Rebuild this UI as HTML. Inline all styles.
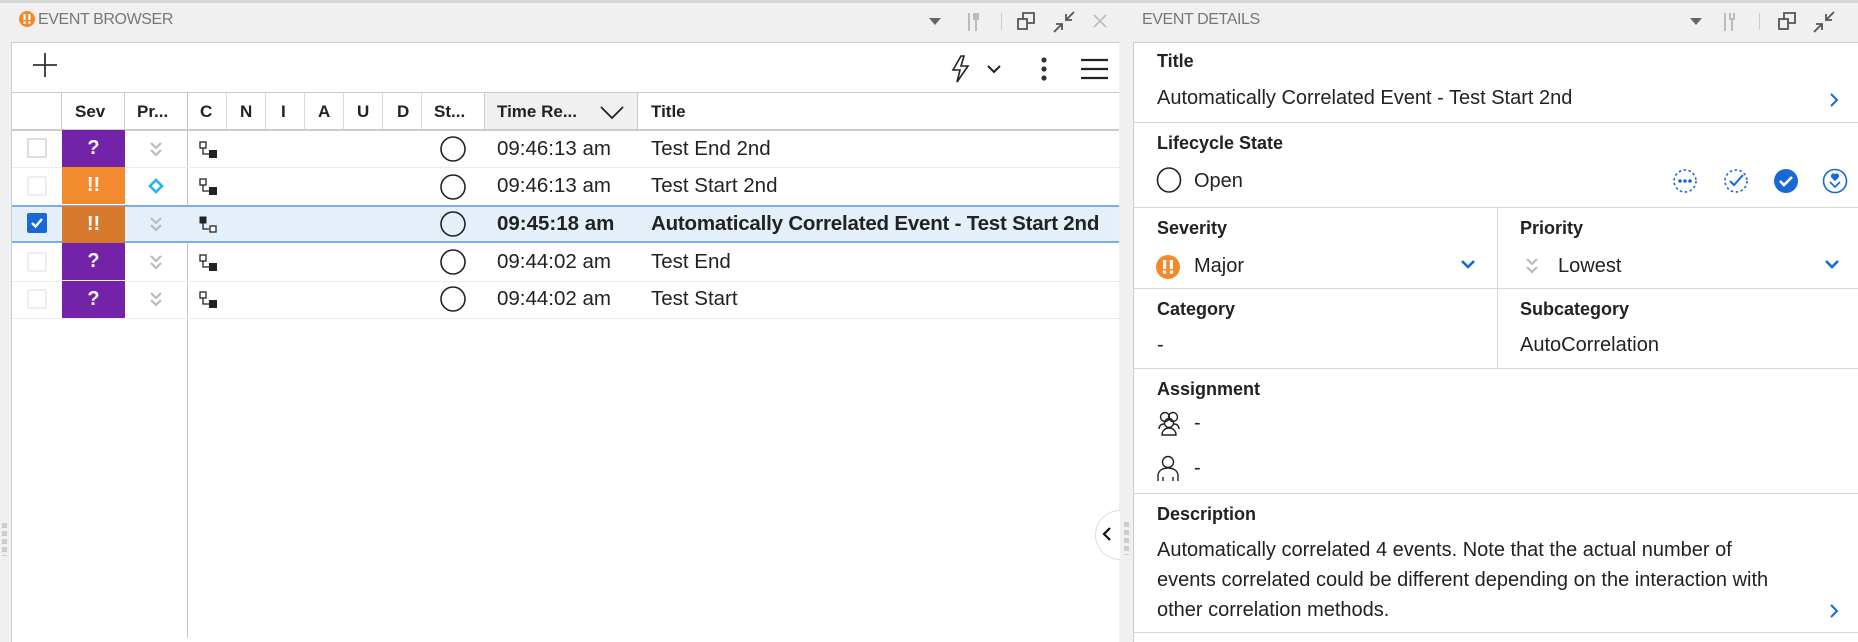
<!DOCTYPE html>
<html><head><meta charset="utf-8"><style>
*{margin:0;padding:0;box-sizing:border-box}
body{width:1858px;height:637px;overflow:hidden;background:#f0f0f0;font-family:"Liberation Sans",sans-serif;color:#222;position:relative}
.a{position:absolute}
.hl{position:absolute;background:#d8d8d8}
.t{position:absolute;font-size:20px;white-space:nowrap;line-height:22px}
.r{font-size:20.5px}
.b{font-weight:bold}
.lb{font-size:18px;font-weight:bold}
.hd{position:absolute;font-size:16px;color:#777;letter-spacing:-0.4px;top:11px}
.ch{position:absolute;font-size:17px;font-weight:bold;top:102px}
.cb{position:absolute;left:27px;width:20px;height:20px;border:2px solid #e3e3e3;border-radius:2px;background:#fff}
.sev{position:absolute;left:62px;width:63px;height:37px;color:#fff;font-weight:bold;font-size:20px;text-align:center;line-height:37px}
</style></head><body>
<div class="hl" style="left:0;top:0;width:1858px;height:3px;background:#d6d6d6"></div>
<svg class="a" style="left:19px;top:11px" width="16" height="16"><circle cx="8" cy="8" r="8" fill="#f18a2a"/><rect x="4.5" y="3" width="2.2" height="6" fill="#fff"/><rect x="9.3" y="3" width="2.2" height="6" fill="#fff"/><rect x="4.5" y="10.5" width="2.2" height="2.2" fill="#fff"/><rect x="9.3" y="10.5" width="2.2" height="2.2" fill="#fff"/></svg>
<div class="hd" style="left:38px">EVENT BROWSER</div>
<svg class="a" style="left:928px;top:17px" width="14" height="10"><path d="M1 1h12L7 8z" fill="#666"/></svg>
<svg class="a" style="left:966px;top:12px" width="14" height="20" stroke="#bbb" stroke-width="2" fill="none"><path d="M3 1v18M10 1v7M10 8v11"/><path d="M8 1v6h4V1"/></svg>
<div class="a" style="left:1001px;top:13px;width:1px;height:17px;background:#ccc"></div>
<svg class="a" style="left:1017px;top:12px" width="18" height="18" stroke="#555" stroke-width="1.8" fill="none"><rect x="1" y="7" width="9" height="10"/><path d="M6 7V1h11v10h-7"/></svg>
<svg class="a" style="left:1053px;top:11px" width="22" height="22" stroke="#555" stroke-width="1.8" fill="none"><path d="M13 9L21 1M13 3v6h6M9 13L1 21M9 19v-6H3"/></svg>
<svg class="a" style="left:1093px;top:14px" width="14" height="14" stroke="#bbb" stroke-width="1.6"><path d="M1 1l12 12M13 1L1 13"/></svg>
<div class="a" style="left:11px;top:42px;width:1108px;height:600px;background:#fff;border-left:1px solid #ccc;border-top:1px solid #ccc"></div>
<svg class="a" style="left:33px;top:53px" width="24" height="24" stroke="#333" stroke-width="1.8"><path d="M12 0v24M0 12h24"/></svg>
<svg class="a" style="left:950px;top:54px" width="22" height="30" stroke="#222" stroke-width="1.6" fill="none"><path d="M11 2L3 16h7l-3 12 11-16h-7l3-10z"/></svg>
<svg class="a" style="left:987px;top:65px" width="14" height="9" stroke="#222" stroke-width="2" fill="none"><path d="M1 1l6 6 6-6"/></svg>
<svg class="a" style="left:1040px;top:56px" width="8" height="26" fill="#333"><circle cx="4" cy="4" r="2.6"/><circle cx="4" cy="13" r="2.6"/><circle cx="4" cy="22" r="2.6"/></svg>
<svg class="a" style="left:1081px;top:58px" width="27" height="22" stroke="#222" stroke-width="2.2"><path d="M0 2h27M0 11h27M0 20h27"/></svg>
<div class="hl" style="left:12px;top:92px;width:1107px;height:1px;background:#ccc"></div>
<div class="a" style="left:484px;top:93px;width:153px;height:37px;background:#f0f0f0"></div>
<div class="hl" style="left:12px;top:129px;width:1107px;height:2px;background:#ccc"></div>
<div class="hl" style="left:61px;top:93px;width:1px;height:36px;background:#ccc"></div>
<div class="hl" style="left:124px;top:93px;width:1px;height:36px;background:#ccc"></div>
<div class="hl" style="left:187px;top:93px;width:1px;height:545px;background:#c4c4c4"></div>
<div class="hl" style="left:226px;top:93px;width:1px;height:36px"></div>
<div class="hl" style="left:265px;top:93px;width:1px;height:36px"></div>
<div class="hl" style="left:304px;top:93px;width:1px;height:36px"></div>
<div class="hl" style="left:343px;top:93px;width:1px;height:36px"></div>
<div class="hl" style="left:382px;top:93px;width:1px;height:36px"></div>
<div class="hl" style="left:421px;top:93px;width:1px;height:36px"></div>
<div class="hl" style="left:484px;top:93px;width:1px;height:36px;background:#ccc"></div>
<div class="hl" style="left:637px;top:93px;width:1px;height:36px;background:#ccc"></div>
<div class="ch" style="left:75px">Sev</div>
<div class="ch" style="left:137px">Pr...</div>
<div class="ch" style="left:200px">C</div>
<div class="ch" style="left:240px">N</div>
<div class="ch" style="left:281px">I</div>
<div class="ch" style="left:318px">A</div>
<div class="ch" style="left:357px">U</div>
<div class="ch" style="left:397px">D</div>
<div class="ch" style="left:434px">St...</div>
<div class="ch" style="left:497px">Time Re...</div>
<svg class="a" style="left:600px;top:106px" width="24" height="14" stroke="#222" stroke-width="1.8" fill="none"><path d="M1 1l11 11L23 1"/></svg>
<div class="ch" style="left:651px">Title</div>
<div class="a" style="left:12px;top:205px;width:1107px;height:38px;background:#e4effa;border-top:2px solid #79aee6;border-bottom:2px solid #79aee6"></div>
<div class="hl" style="left:12px;top:167px;width:1107px;height:1px;background:#ececec"></div>
<div class="hl" style="left:12px;top:281px;width:1107px;height:1px;background:#ececec"></div>
<div class="hl" style="left:12px;top:318px;width:1107px;height:1px;background:#ececec"></div>
<div class="cb" style="top:138px;border-color:#ddd"></div>
<div class="cb" style="top:176px;border-color:#eee"></div>
<div class="cb" style="top:213px;background:#1769d8;border-color:#1769d8"><svg width="16" height="16" style="position:absolute;left:0;top:0" stroke="#fff" stroke-width="2.4" fill="none"><path d="M3 8l3.5 3.5L13 4"/></svg></div>
<div class="cb" style="top:252px;border-color:#eee"></div>
<div class="cb" style="top:289px;border-color:#eee"></div>
<div class="sev" style="top:130px;background:#7323a8">?</div>
<div class="sev" style="top:167px;background:#f28b30">!!</div>
<div class="sev" style="top:206px;background:#d87a2e">!!</div>
<div class="sev" style="top:243px;background:#7323a8">?</div>
<div class="sev" style="top:281px;background:#7323a8">?</div>
<svg class="a" style="left:149px;top:141px" width="14" height="18" stroke="#bbb" stroke-width="2.2" fill="none"><path d="M2 2l5 5 5-5M2 9l5 5 5-5"/></svg>
<svg class="a" style="left:148px;top:178px" width="16" height="16" stroke="#22b5ee" stroke-width="2.6" fill="none"><path d="M8 2l6 6-6 6-6-6z"/></svg>
<svg class="a" style="left:149px;top:216px" width="14" height="18" stroke="#bbb" stroke-width="2.2" fill="none"><path d="M2 2l5 5 5-5M2 9l5 5 5-5"/></svg>
<svg class="a" style="left:149px;top:254px" width="14" height="18" stroke="#bbb" stroke-width="2.2" fill="none"><path d="M2 2l5 5 5-5M2 9l5 5 5-5"/></svg>
<svg class="a" style="left:149px;top:291px" width="14" height="18" stroke="#bbb" stroke-width="2.2" fill="none"><path d="M2 2l5 5 5-5M2 9l5 5 5-5"/></svg>
<svg class="a" style="left:199px;top:141px" width="19" height="18"><rect x="1" y="1" width="6" height="6" fill="#fff" stroke="#222" stroke-width="1.3"/><path d="M4 7v6h6" stroke="#222" stroke-width="1.3" fill="none"/><rect x="10" y="9" width="8" height="8" fill="#222"/></svg>
<svg class="a" style="left:199px;top:178px" width="19" height="18"><rect x="1" y="1" width="6" height="6" fill="#fff" stroke="#222" stroke-width="1.3"/><path d="M4 7v6h6" stroke="#222" stroke-width="1.3" fill="none"/><rect x="10" y="9" width="8" height="8" fill="#222"/></svg>
<svg class="a" style="left:199px;top:216px" width="19" height="18"><rect x="0.5" y="0.5" width="7" height="7" fill="#222"/><path d="M4 7v6h6" stroke="#222" stroke-width="1.3" fill="none"/><rect x="11" y="10" width="6" height="6" fill="#fff" stroke="#222" stroke-width="1.3"/></svg>
<svg class="a" style="left:199px;top:254px" width="19" height="18"><rect x="1" y="1" width="6" height="6" fill="#fff" stroke="#222" stroke-width="1.3"/><path d="M4 7v6h6" stroke="#222" stroke-width="1.3" fill="none"/><rect x="10" y="9" width="8" height="8" fill="#222"/></svg>
<svg class="a" style="left:199px;top:291px" width="19" height="18"><rect x="1" y="1" width="6" height="6" fill="#fff" stroke="#222" stroke-width="1.3"/><path d="M4 7v6h6" stroke="#222" stroke-width="1.3" fill="none"/><rect x="10" y="9" width="8" height="8" fill="#222"/></svg>
<svg class="a" style="left:440px;top:136px" width="26" height="212" stroke="#222" stroke-width="1.6" fill="none"><ellipse cx="13" cy="13" rx="12" ry="12"/><ellipse cx="13" cy="51" rx="12" ry="12"/><ellipse cx="13" cy="88" rx="12" ry="12"/><ellipse cx="13" cy="126" rx="12" ry="12"/><ellipse cx="13" cy="163" rx="12" ry="12"/></svg>
<div class="t r" style="left:497px;top:138px">09:46:13 am</div>
<div class="t r" style="left:497px;top:175px">09:46:13 am</div>
<div class="t r b" style="left:497px;top:213px">09:45:18 am</div>
<div class="t r" style="left:497px;top:251px">09:44:02 am</div>
<div class="t r" style="left:497px;top:288px">09:44:02 am</div>
<div class="t r" style="left:651px;top:138px">Test End 2nd</div>
<div class="t r" style="left:651px;top:175px">Test Start 2nd</div>
<div class="t r b" style="left:651px;top:213px;letter-spacing:-0.2px">Automatically Correlated Event - Test Start 2nd</div>
<div class="t r" style="left:651px;top:251px">Test End</div>
<div class="t r" style="left:651px;top:288px">Test Start</div>
<div class="a" style="left:2px;top:523px;width:5px;height:33px;background:repeating-linear-gradient(#ccc 0 5px,transparent 5px 8px)"></div>
<div class="hd" style="left:1142px">EVENT DETAILS</div>
<svg class="a" style="left:1689px;top:17px" width="14" height="10"><path d="M1 1h12L7 8z" fill="#666"/></svg>
<svg class="a" style="left:1722px;top:12px" width="14" height="20" stroke="#bbb" stroke-width="2" fill="none"><path d="M3 1v18M10 8v11"/><path d="M8 1v6h4V1"/></svg>
<div class="a" style="left:1759px;top:13px;width:1px;height:17px;background:#ccc"></div>
<svg class="a" style="left:1778px;top:12px" width="18" height="18" stroke="#555" stroke-width="1.8" fill="none"><rect x="1" y="7" width="9" height="10"/><path d="M6 7V1h11v10h-7"/></svg>
<svg class="a" style="left:1813px;top:11px" width="22" height="22" stroke="#555" stroke-width="1.8" fill="none"><path d="M13 9L21 1M13 3v6h6M9 13L1 21M9 19v-6H3"/></svg>
<div class="a" style="left:1133px;top:42px;width:725px;height:600px;background:#fff;border-left:1px solid #ccc;border-top:1px solid #ccc"></div>
<div class="t lb" style="left:1157px;top:50px">Title</div>
<div class="t" style="left:1157px;top:87px">Automatically Correlated Event - Test Start 2nd</div>
<svg class="a" style="left:1829px;top:92px" width="10" height="16" stroke="#1769d8" stroke-width="2" fill="none"><path d="M2 2l6 6-6 6"/></svg>
<div class="hl" style="left:1134px;top:122px;width:724px;height:1px"></div>
<div class="t lb" style="left:1157px;top:132px">Lifecycle State</div>
<svg class="a" style="left:1156px;top:166px" width="26" height="28" stroke="#222" stroke-width="1.6" fill="none"><ellipse cx="13" cy="14" rx="11.5" ry="12"/></svg>
<div class="t" style="left:1194px;top:170px">Open</div>
<svg class="a" style="left:1672px;top:168px" width="26" height="26" stroke="#1769d8" stroke-width="1.6" fill="none" stroke-dasharray="2.5 2.5"><circle cx="13" cy="13" r="11"/><g fill="#1769d8" stroke="none"><circle cx="8" cy="13" r="1.8"/><circle cx="13" cy="13" r="1.8"/><circle cx="18" cy="13" r="1.8"/></g></svg>
<svg class="a" style="left:1723px;top:168px" width="26" height="26" stroke="#1769d8" stroke-width="1.6" fill="none"><circle cx="13" cy="13" r="11" stroke-dasharray="2.5 2.5"/><path d="M7 13l4 4 9-10" stroke-width="2"/></svg>
<svg class="a" style="left:1773px;top:168px" width="26" height="26"><circle cx="13" cy="13" r="12" fill="#1769d8"/><path d="M7 13l4 4 8-8" stroke="#fff" stroke-width="2.6" fill="none"/></svg>
<svg class="a" style="left:1822px;top:168px" width="26" height="26" stroke="#1769d8" stroke-width="1.6" fill="none"><circle cx="13" cy="13" r="11.5"/><path d="M8 14l5 5 5-5"/><path d="M13 12l-3-3a1.8 1.8 0 0 1 3-2 1.8 1.8 0 0 1 3 2z" fill="#1769d8"/></svg>
<div class="hl" style="left:1134px;top:207px;width:724px;height:1px"></div>
<div class="t lb" style="left:1157px;top:217px">Severity</div>
<div class="t lb" style="left:1520px;top:217px">Priority</div>
<div class="hl" style="left:1497px;top:208px;width:1px;height:160px"></div>
<svg class="a" style="left:1156px;top:255px" width="24" height="24"><circle cx="12" cy="12" r="12" fill="#f18a2a"/><rect x="7" y="5" width="3.2" height="9" fill="#fff"/><rect x="13.8" y="5" width="3.2" height="9" fill="#fff"/><rect x="7" y="15.5" width="3.2" height="3.2" fill="#fff"/><rect x="13.8" y="15.5" width="3.2" height="3.2" fill="#fff"/></svg>
<div class="t" style="left:1194px;top:255px">Major</div>
<svg class="a" style="left:1460px;top:259px" width="16" height="11" stroke="#1769d8" stroke-width="2.6" fill="none"><path d="M2 2l6 6 6-6"/></svg>
<svg class="a" style="left:1525px;top:257px" width="14" height="20" stroke="#bbb" stroke-width="2.2" fill="none"><path d="M2 2l5 5 5-5M2 10l5 5 5-5"/></svg>
<div class="t" style="left:1558px;top:255px">Lowest</div>
<svg class="a" style="left:1824px;top:259px" width="16" height="11" stroke="#1769d8" stroke-width="2.6" fill="none"><path d="M2 2l6 6 6-6"/></svg>
<div class="hl" style="left:1134px;top:288px;width:724px;height:1px"></div>
<div class="t lb" style="left:1157px;top:298px">Category</div>
<div class="t lb" style="left:1520px;top:298px">Subcategory</div>
<div class="t" style="left:1157px;top:334px">-</div>
<div class="t" style="left:1520px;top:334px">AutoCorrelation</div>
<div class="hl" style="left:1134px;top:368px;width:724px;height:1px"></div>
<div class="t lb" style="left:1157px;top:378px">Assignment</div>
<svg class="a" style="left:1156px;top:410px" width="26" height="26" stroke="#222" stroke-width="1.4" fill="none"><circle cx="9" cy="7" r="4.5"/><circle cx="17" cy="7" r="4.5"/><circle cx="13" cy="13" r="4.5"/><path d="M3 19c0-3 2-5 5-5M23 19c0-3-2-5-5-5M6 25c0-4 3-7 7-7s7 3 7 7z"/></svg>
<div class="t" style="left:1194px;top:412px">-</div>
<svg class="a" style="left:1156px;top:455px" width="24" height="27" stroke="#222" stroke-width="1.4" fill="none"><circle cx="12" cy="7" r="5.5"/><path d="M2 26v-5c0-5 4-8 10-8s10 3 10 8v5M7 22v4M17 22v4"/></svg>
<div class="t" style="left:1194px;top:457px">-</div>
<div class="hl" style="left:1134px;top:493px;width:724px;height:1px"></div>
<div class="t lb" style="left:1157px;top:503px">Description</div>
<div class="t" style="left:1157px;top:539px">Automatically correlated 4 events. Note that the actual number of</div>
<div class="t" style="left:1157px;top:569px">events correlated could be different depending on the interaction with</div>
<div class="t" style="left:1157px;top:599px">other correlation methods.</div>
<svg class="a" style="left:1829px;top:603px" width="10" height="16" stroke="#1769d8" stroke-width="2" fill="none"><path d="M2 2l6 6-6 6"/></svg>
<div class="hl" style="left:1134px;top:632px;width:724px;height:1px"></div>
<div class="a" style="left:1095px;top:510px;width:50px;height:50px;border-radius:50%;background:#fff;border:1px solid #ddd;clip-path:inset(0 25px 0 0)"></div>
<svg class="a" style="left:1102px;top:526px" width="10" height="16" stroke="#111" stroke-width="2.2" fill="none"><path d="M8 2L2 8l6 6"/></svg>
<div class="a" style="left:1124px;top:522px;width:5px;height:33px;background:repeating-linear-gradient(#ccc 0 5px,transparent 5px 8px)"></div>
</body></html>
